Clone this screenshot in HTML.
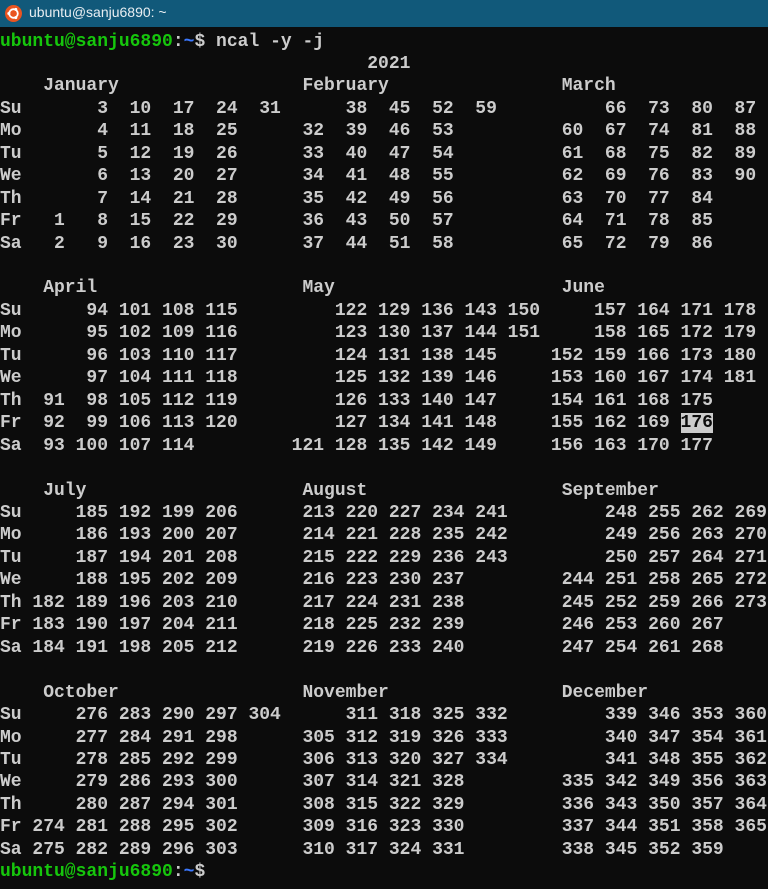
<!DOCTYPE html>
<html><head><meta charset="utf-8"><style>
html,body{margin:0;padding:0;background:#0c0c0c;width:768px;height:889px;overflow:hidden}
.tb{position:absolute;left:0;top:0;width:768px;height:27px;background:#11597a}
.tb .ic{position:absolute;left:5px;top:5px;width:17px;height:17px;border-radius:50%;background:#e95420}
.tb .t{position:absolute;left:29px;top:4px;font:14px "Liberation Sans",sans-serif;color:#e8eef2}
pre{position:absolute;left:0;top:30.5px;margin:0;font:bold 18px/22.45px "Liberation Mono",monospace;color:#cccccc}
.g{color:#16c60c}.b{color:#3b78ff}.h{background:#cccccc;color:#0c0c0c}
</style></head><body>
<div class="tb"><div class="ic"><svg width="17" height="17" viewBox="0 0 17 17"><circle cx="8.5" cy="8.5" r="4.3" fill="none" stroke="#fff" stroke-width="1.8"/><circle cx="3.8" cy="8.5" r="1.5" fill="#fff"/><circle cx="10.8" cy="4.4" r="1.5" fill="#fff"/><circle cx="10.8" cy="12.6" r="1.5" fill="#fff"/></svg></div><div class="t">ubuntu@sanju6890: ~</div></div>
<pre><span class="g">ubuntu@sanju6890</span>:<span class="b">~</span>$ ncal -y -j
                                  2021
    January                 February                March
Su       3  10  17  24  31      38  45  52  59          66  73  80  87
Mo       4  11  18  25      32  39  46  53          60  67  74  81  88
Tu       5  12  19  26      33  40  47  54          61  68  75  82  89
We       6  13  20  27      34  41  48  55          62  69  76  83  90
Th       7  14  21  28      35  42  49  56          63  70  77  84
Fr   1   8  15  22  29      36  43  50  57          64  71  78  85
Sa   2   9  16  23  30      37  44  51  58          65  72  79  86

    April                   May                     June
Su      94 101 108 115         122 129 136 143 150     157 164 171 178
Mo      95 102 109 116         123 130 137 144 151     158 165 172 179
Tu      96 103 110 117         124 131 138 145     152 159 166 173 180
We      97 104 111 118         125 132 139 146     153 160 167 174 181
Th  91  98 105 112 119         126 133 140 147     154 161 168 175
Fr  92  99 106 113 120         127 134 141 148     155 162 169 <span class="h">176</span>
Sa  93 100 107 114         121 128 135 142 149     156 163 170 177

    July                    August                  September
Su     185 192 199 206      213 220 227 234 241         248 255 262 269
Mo     186 193 200 207      214 221 228 235 242         249 256 263 270
Tu     187 194 201 208      215 222 229 236 243         250 257 264 271
We     188 195 202 209      216 223 230 237         244 251 258 265 272
Th 182 189 196 203 210      217 224 231 238         245 252 259 266 273
Fr 183 190 197 204 211      218 225 232 239         246 253 260 267
Sa 184 191 198 205 212      219 226 233 240         247 254 261 268

    October                 November                December
Su     276 283 290 297 304      311 318 325 332         339 346 353 360
Mo     277 284 291 298      305 312 319 326 333         340 347 354 361
Tu     278 285 292 299      306 313 320 327 334         341 348 355 362
We     279 286 293 300      307 314 321 328         335 342 349 356 363
Th     280 287 294 301      308 315 322 329         336 343 350 357 364
Fr 274 281 288 295 302      309 316 323 330         337 344 351 358 365
Sa 275 282 289 296 303      310 317 324 331         338 345 352 359
<span class="g">ubuntu@sanju6890</span>:<span class="b">~</span>$</pre>
</body></html>
